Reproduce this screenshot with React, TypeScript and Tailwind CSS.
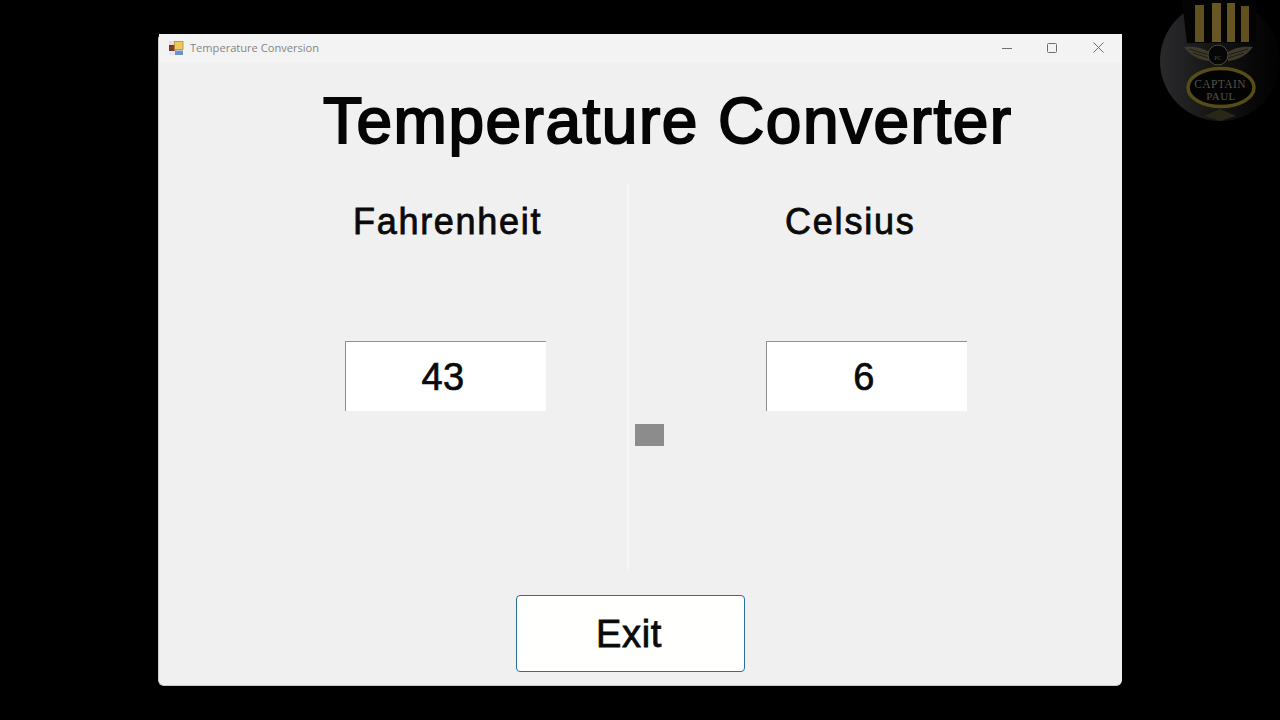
const CaptainLogo = () => (
  <svg width="120" height="124" viewBox="0 0 120 124" className="absolute left-[1160px] top-0">
    <defs>
      <linearGradient id="disc" x1="0" y1="0" x2="1" y2="0">
        <stop offset="0" stopColor="#2a2a2d" />
        <stop offset="0.4" stopColor="#171718" />
        <stop offset="0.85" stopColor="#050505" />
        <stop offset="1" stopColor="#020202" />
      </linearGradient>
    </defs>
    <circle cx="60" cy="61" r="60" fill="url(#disc)" />
    <path d="M22 0H96V43H27Z" fill="#040404" />
    <rect x="35" y="5" width="9" height="37" fill="#615120" />
    <rect x="52" y="3" width="9" height="39" fill="#675724" />
    <rect x="67" y="3" width="8" height="39" fill="#655522" />
    <rect x="81" y="6" width="8" height="36" fill="#5f501e" />
    <path d="M24 47C37 46 45 49 50 53L49 61C39 60 30 55 24 47Z" fill="#3f3a2b" />
    <path d="M93 47C80 46 72 49 67 53L68 61C78 60 87 55 93 47Z" fill="#3f3a2b" />
    <path d="M29 49L49 55M33 53L49 58M88 49L68 55M84 53L68 58" stroke="#1c1a12" strokeWidth="1" />
    <circle cx="58" cy="55" r="10" fill="#060606" stroke="#4f4936" strokeWidth="1" />
    <text x="58" y="60" textAnchor="middle" fontSize="6" fill="#4f4936" fontFamily="Liberation Serif, serif">PC</text>
    <ellipse cx="61" cy="87.5" rx="33" ry="19" fill="#030303" stroke="#574c17" strokeWidth="3.5" />
    <text x="60" y="88" textAnchor="middle" fontSize="11.5" letterSpacing="0.4" fill="#54524a" fontFamily="Liberation Serif, serif">CAPTAIN</text>
    <text x="61" y="100" textAnchor="middle" fontSize="11" letterSpacing="0.4" fill="#54524a" fontFamily="Liberation Serif, serif">PAUL</text>
    <path d="M44 116L60 109L76 116L60 121Z" fill="#2a2719" />
  </svg>
)

const AppIcon = () => (
  <svg width="15" height="15" viewBox="0 0 15 15">
    <rect x="0" y="0" width="6" height="5" fill="#e3dbe2" />
    <rect x="0.5" y="4.5" width="5" height="5" fill="#8a3a28" stroke="#4a2a22" strokeWidth="0.8" />
    <rect x="0" y="10" width="6" height="4" fill="#ebe6ea" />
    <rect x="5.5" y="0.5" width="8.5" height="8" fill="#ecc95a" stroke="#b58d2a" strokeWidth="0.8" />
    <rect x="6" y="9.5" width="8" height="4.5" fill="#6d90c6" />
  </svg>
)

const ReadOut = ({ value }: { value: string }) => (
  <div className="flex h-[70px] w-[201px] items-center justify-center border-t border-l border-[#8f8f8f] bg-white pt-[2px] pr-[6px] text-[38px] tracking-[0.4px] text-[#0a0a0a] [-webkit-text-stroke:0.7px_#0a0a0a]">
    {value}
  </div>
)

export default function App() {
  return (
    <div className="relative h-screen w-full overflow-hidden bg-black pt-[34px] pl-[158px] font-['Liberation_Sans',sans-serif]">
      <CaptainLogo />
      <div className="flex h-[652px] w-[964px] flex-col rounded-b-[6px] rounded-tl-[5px] border-b border-l border-[#c9c9c9] bg-[#f0f0f0]">
        <div className="flex h-[29px] items-center bg-[#f3f3f3] pl-[10px]">
          <AppIcon />
          <span className="mb-[1px] ml-[6px] font-['Open_Sans',sans-serif] text-[11.1px] text-[#858585]">Temperature Conversion</span>
          <div className="mb-[2px] ml-auto flex items-center text-[#6f6f6f]">
            <svg width="10" height="10" viewBox="0 0 10 10" className="mr-[35px]">
              <path d="M0 5.5H10" stroke="currentColor" strokeWidth="1" />
            </svg>
            <svg width="10" height="10" viewBox="0 0 10 10" className="mr-[36px]">
              <rect x="0.5" y="0.5" width="9" height="9" rx="1" fill="none" stroke="currentColor" strokeWidth="1" />
            </svg>
            <svg width="11" height="11" viewBox="0 0 11 11" className="mr-[18px]">
              <path d="M0.5 0.5L10.5 10.5M10.5 0.5L0.5 10.5" stroke="currentColor" strokeWidth="1" />
            </svg>
          </div>
        </div>

        <h1 className="mt-[23px] pl-[164px] text-[64px] leading-[70px] tracking-[1.5px] whitespace-nowrap text-[#050505] [-webkit-text-stroke:2px_#050505]">
          Temperature Converter
        </h1>

        <div className="mt-[28px] flex h-[385px]">
          <div className="w-[468px] pt-[16px] pl-[187px]">
            <div className="pl-[7px] text-[36px] leading-[44px] tracking-[1.7px] text-[#0a0a0a] [-webkit-text-stroke:0.8px_#0a0a0a]">Fahrenheit</div>
            <div className="mt-[97px] ml-[-1px]">
              <ReadOut value="43" />
            </div>
          </div>
          <div className="w-[2px] bg-[#f8f8f8]" />
          <div className="flex-1 pt-[16px]">
            <div className="pl-[156px] text-[36px] leading-[44px] tracking-[1.8px] text-[#0a0a0a] [-webkit-text-stroke:0.8px_#0a0a0a]">Celsius</div>
            <div className="mt-[97px] pl-[137px]">
              <ReadOut value="6" />
            </div>
            <div className="mt-[13px] ml-[6px] h-[22px] w-[29px] bg-[#8c8c8c]" />
          </div>
        </div>

        <div className="mt-[26px] pl-[357px]">
          <button className="flex h-[77px] w-[229px] items-center justify-center rounded-[4px] border border-[#2a6f9e] bg-[#fffffd] pt-[2px] pr-[3px] text-[38px] tracking-[0.7px] text-[#0a0a0a] [-webkit-text-stroke:0.8px_#0a0a0a]">
            Exit
          </button>
        </div>
      </div>
    </div>
  )
}
